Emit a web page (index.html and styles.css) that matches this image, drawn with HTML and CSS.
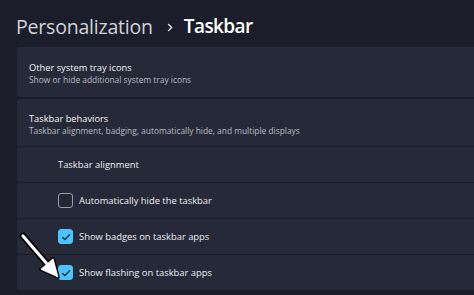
FILE: index.html
```html
<!DOCTYPE html>
<html lang="en">
<head>
    <meta charset="UTF-8">
    <title>Taskbar</title>
    <link rel="stylesheet" href="styles.css">
</head>
<body>
    <div class="page">
        <h1 class="crumb">
            <span class="crumb-parent">Personalization</span>
            <svg class="crumb-sep" width="6" height="9" viewBox="0 0 6 9"><path d="M1.2 1 L4.6 4.5 L1.2 8" fill="none" stroke="#d8d8d8" stroke-width="1.5"/></svg>
            <span class="crumb-current">Taskbar</span>
        </h1>

        <div class="cards">
            <div class="card card-head first">
                <div class="card-title">Other system tray icons</div>
                <div class="card-sub">Show or hide additional system tray icons</div>
            </div>

            <div class="group">
                <div class="card card-head">
                    <div class="card-title">Taskbar behaviors</div>
                    <div class="card-sub">Taskbar alignment, badging, automatically hide, and multiple displays</div>
                </div>
                <div class="card row">
                    <span class="row-label">Taskbar alignment</span>
                </div>
                <div class="card row">
                    <span class="check"></span>
                    <span class="row-label">Automatically hide the taskbar</span>
                </div>
                <div class="card row">
                    <span class="check on"><svg width="10" height="8" viewBox="0 0 10 8"><path d="M1.3 4.2 L3.9 6.6 L8.8 1.4" fill="none" stroke="#1a2230" stroke-width="1.3"/></svg></span>
                    <span class="row-label">Show badges on taskbar apps</span>
                </div>
                <div class="card row">
                    <span class="check on"><svg width="10" height="8" viewBox="0 0 10 8"><path d="M1.3 4.2 L3.9 6.6 L8.8 1.4" fill="none" stroke="#1a2230" stroke-width="1.3"/></svg></span>
                    <span class="row-label">Show flashing on taskbar apps</span>
                </div>
            </div>
        </div>

        <!-- 指示箭头，盖在列表上 -->
        <svg class="pointer" width="50" height="52" viewBox="0 0 50 52">
            <path d="M5 5 L30 34" stroke="#000" stroke-width="6.5" stroke-linecap="round"/>
            <path d="M40 46 L35.1 27.8 L22.9 38.2 Z" fill="#000" stroke="#000" stroke-width="3.5" stroke-linejoin="round"/>
            <path d="M5 5 L30 34" stroke="#fff" stroke-width="3.2" stroke-linecap="round"/>
            <path d="M40 46 L35.1 27.8 L22.9 38.2 Z" fill="#fff" stroke="#fff" stroke-width="0.8" stroke-linejoin="round"/>
        </svg>
    </div>
</body>
</html>
```

FILE: styles.css
```css
* {
    padding: 0px;
    margin: 0px;
    box-sizing: border-box;
}

body {
    background: #1b1e2a;
    font-family: "Open Sans", "Noto Sans", sans-serif;
    color: #ffffff;
    width: 474px;
    height: 295px;
    overflow: hidden;
}

.page {
    position: relative;
    height: 100%;
}

/* 标题面包屑 */
.crumb {
    display: flex;
    align-items: center;
    height: 47px;
    padding: 5px 0px 0px 16px;
    font-size: 19.5px;
    font-weight: 600;
    letter-spacing: -0.2px;
}

.crumb-parent {
    color: #d2d3d6;
    font-weight: 500;
}

.crumb-sep {
    margin: 2px 11px 0px 14px;
}

.crumb-current {
    color: #ffffff;
    font-size: 19px;
    font-weight: 600;
    letter-spacing: -0.6px;
}

.cards {
    display: flex;
    flex-direction: column;
    gap: 2px;
    padding-left: 17px;
}

.group {
    display: flex;
    flex-direction: column;
    gap: 1px;
}

.card {
    background: #262a38;
    border-radius: 3px 0px 0px 3px;
}

.card-head {
    height: 47px;
    padding: 13px 12px 0px 12px;
}

.card-head.first {
    height: 50px;
    padding-top: 14px;
}

.card-title {
    font-size: 9.3px;
    line-height: 13px;
    color: #f4f4f6;
}

.card-sub {
    font-size: 8.4px;
    line-height: 12px;
    color: #b9bbc2;
    white-space: nowrap;
}

.row {
    display: flex;
    align-items: center;
    height: 35px;
    padding-left: 41px;
    background: #252938;
}

.row-label {
    font-size: 9.4px;
    color: #eeeef0;
}

.check {
    width: 15px;
    height: 15px;
    margin-right: 6px;
    border: 1px solid #9a9ca6;
    border-radius: 3px;
    background: #232735;
    display: flex;
    align-items: center;
    justify-content: center;
}

.check.on {
    background: #4cc2ff;
    border-color: #4cc2ff;
}

.pointer {
    position: absolute;
    left: 18px;
    top: 231px;
}
```
